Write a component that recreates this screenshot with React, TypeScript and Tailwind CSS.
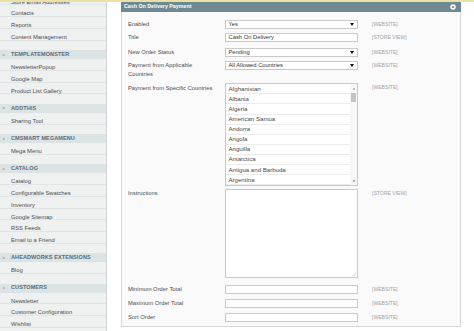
import React from "react";

type Group = { h?: string; items: string[] };

const groups: Group[] = [
  { items: ["Store Email Addresses", "Contacts", "Reports", "Content Management"] },
  { h: "TEMPLATEMONSTER", items: ["NewsletterPopup", "Google Map", "Product List Gallery"] },
  { h: "ADDTHIS", items: ["Sharing Tool"] },
  { h: "CMSMART MEGAMENU", items: ["Mega Menu"] },
  {
    h: "CATALOG",
    items: ["Catalog", "Configurable Swatches", "Inventory", "Google Sitemap", "RSS Feeds", "Email to a Friend"],
  },
  { h: "AHEADWORKS EXTENSIONS", items: ["Blog"] },
  { h: "CUSTOMERS", items: ["Newsletter", "Customer Configuration", "Wishlist"] },
];

const countries = [
  "Afghanistan",
  "Albania",
  "Algeria",
  "American Samoa",
  "Andorra",
  "Angola",
  "Anguilla",
  "Antarctica",
  "Antigua and Barbuda",
  "Argentina",
];

function Arrow() {
  return (
    <svg width="4" height="3" viewBox="0 0 4 3" className="shrink-0">
      <path d="M0 0 L4 0 L2 3 Z" fill="#111" />
    </svg>
  );
}

function Select({ value }: { value: string }) {
  return (
    <div className="w-[133px] h-[9px] shrink-0 bg-white border border-[#c9c9c9] flex items-center justify-between pl-[2.5px] pr-[3px] text-[5.8px] text-[#333] leading-none">
      <span>{value}</span>
      <Arrow />
    </div>
  );
}

function Input({ value }: { value?: string }) {
  return (
    <div className="w-[133px] h-[9px] shrink-0 bg-white border border-[#c9c9c9] flex items-center pl-[2.5px] text-[5.8px] text-[#333] leading-none">
      {value}
    </div>
  );
}

function Label({ children }: { children: React.ReactNode }) {
  return <div className="w-[97px] shrink-0 text-[5.8px] leading-[9px] text-[#4d4d4d]">{children}</div>;
}

function Scope({ children }: { children: React.ReactNode }) {
  return <div className="ml-[14px] text-[5.1px] leading-[9px] text-[#a3a3a3]">{children}</div>;
}

export default function App() {
  return (
    <div className="w-[474px] h-[331px] overflow-hidden bg-white flex flex-col font-['Liberation_Sans',Arial,sans-serif]">
      <div className="h-[2px] shrink-0 bg-[#e8e1a8]" />
      <div className="flex flex-1 min-h-0">
        <aside className="w-[107px] shrink-0 bg-[#eff1f1] border-r border-[#cfd5d6] overflow-hidden">
          {groups.map((g, gi) => (
            <div key={gi} className={gi === 0 ? "-mt-[8.5px]" : "mt-[9.5px]"}>
              {g.h && (
                <div className="h-[9px] bg-[#dce3e5] flex items-center pl-[2.5px]">
                  <span className="text-[4px] text-[#8b9ba1] w-[8.5px] leading-none">▸</span>
                  <span className="text-[5.5px] font-bold tracking-[0.1px] text-[#5a6a71] leading-none">{g.h}</span>
                </div>
              )}
              {g.items.map((it) => (
                <div
                  key={it}
                  className="h-[11.75px] border-b border-[#e0e4e5] flex items-center pt-[7.5px] pl-[11px] text-[5.8px] text-[#4a4a4a] leading-none"
                >
                  {it}
                </div>
              ))}
            </div>
          ))}
        </aside>

        <main className="ml-[14px] w-[340px] shrink-0 flex flex-col">
          <div className="h-[10px] bg-[#6f8992] flex items-center justify-between pl-[3px] pr-[5px]">
            <span className="text-[5.3px] font-bold text-white leading-none">Cash On Delivery Payment</span>
            <svg width="6" height="6" viewBox="0 0 6 6">
              <circle cx="3" cy="3" r="2.8" fill="#f4f6f6" />
              <path d="M1.7 3.6 L3 2 L4.3 3.6 Z" fill="#333" />
            </svg>
          </div>
          <div className="h-[315px] bg-[#fafafa] border border-t-0 border-[#d6d6d6] pl-[6px] pt-[8px]">
            <div className="flex items-start">
              <Label>Enabled</Label>
              <Select value="Yes" />
              <Scope>[WEBSITE]</Scope>
            </div>
            <div className="flex items-start mt-[4.3px]">
              <Label>Title</Label>
              <Input value="Cash On Delivery" />
              <Scope>[STORE VIEW]</Scope>
            </div>
            <div className="flex items-start mt-[6px]">
              <Label>New Order Status</Label>
              <Select value="Pending" />
              <Scope>[WEBSITE]</Scope>
            </div>
            <div className="flex items-start mt-[3.7px]">
              <div className="w-[97px] shrink-0 text-[5.8px] leading-[8.7px] text-[#4d4d4d]">
                Payment from Applicable
                <br />
                Countries
              </div>
              <Select value="All Allowed Countries" />
              <Scope>[WEBSITE]</Scope>
            </div>
            <div className="flex items-start mt-[4.9px]">
              <Label>
                <div className="pt-[0.5px]">Payment from Specific Countries</div>
              </Label>
              <div className="w-[133px] h-[103px] shrink-0 bg-white border border-[#c9c9c9] flex">
                <div className="flex-1">
                  {countries.map((c) => (
                    <div
                      key={c}
                      className="h-[10.1px] border-b border-[#ececec] flex items-center pl-[2.5px] text-[6.1px] text-[#4a4a4a] leading-none"
                    >
                      {c}
                    </div>
                  ))}
                </div>
                <div className="w-[7px] bg-[#f7f7f7] flex flex-col items-center">
                  <svg width="4" height="5" viewBox="0 0 4 5" className="mt-[1.5px]">
                    <path d="M0.8 3.5 L2 2 L3.2 3.5 Z" fill="#777" />
                  </svg>
                  <div className="w-[5px] h-[9px] bg-[#c4c4c4] mt-[2px]" />
                  <div className="flex-1" />
                  <svg width="4" height="5" viewBox="0 0 4 5" className="mb-[1.5px]">
                    <path d="M0.8 1.5 L2 3 L3.2 1.5 Z" fill="#555" />
                  </svg>
                </div>
              </div>
              <Scope>[WEBSITE]</Scope>
            </div>
            <div className="flex items-start mt-[3px]">
              <Label>Instructions</Label>
              <div className="w-[133px] h-[88.7px] shrink-0 bg-white border border-[#c9c9c9] relative">
                <svg width="4" height="4" viewBox="0 0 4 4" className="absolute right-[1px] bottom-[1px]">
                  <path d="M4 0.5 L0.5 4 M4 2.2 L2.2 4" stroke="#aaa" strokeWidth="0.5" />
                </svg>
              </div>
              <Scope>[STORE VIEW]</Scope>
            </div>
            <div className="flex items-start mt-[6.6px]">
              <Label>Minimum Order Total</Label>
              <Input />
              <Scope>[WEBSITE]</Scope>
            </div>
            <div className="flex items-start mt-[5.7px]">
              <Label>Maximum Order Total</Label>
              <Input />
              <Scope>[WEBSITE]</Scope>
            </div>
            <div className="flex items-start mt-[5px]">
              <Label>Sort Order</Label>
              <Input />
              <Scope>[WEBSITE]</Scope>
            </div>
          </div>
        </main>
      </div>
    </div>
  );
}
